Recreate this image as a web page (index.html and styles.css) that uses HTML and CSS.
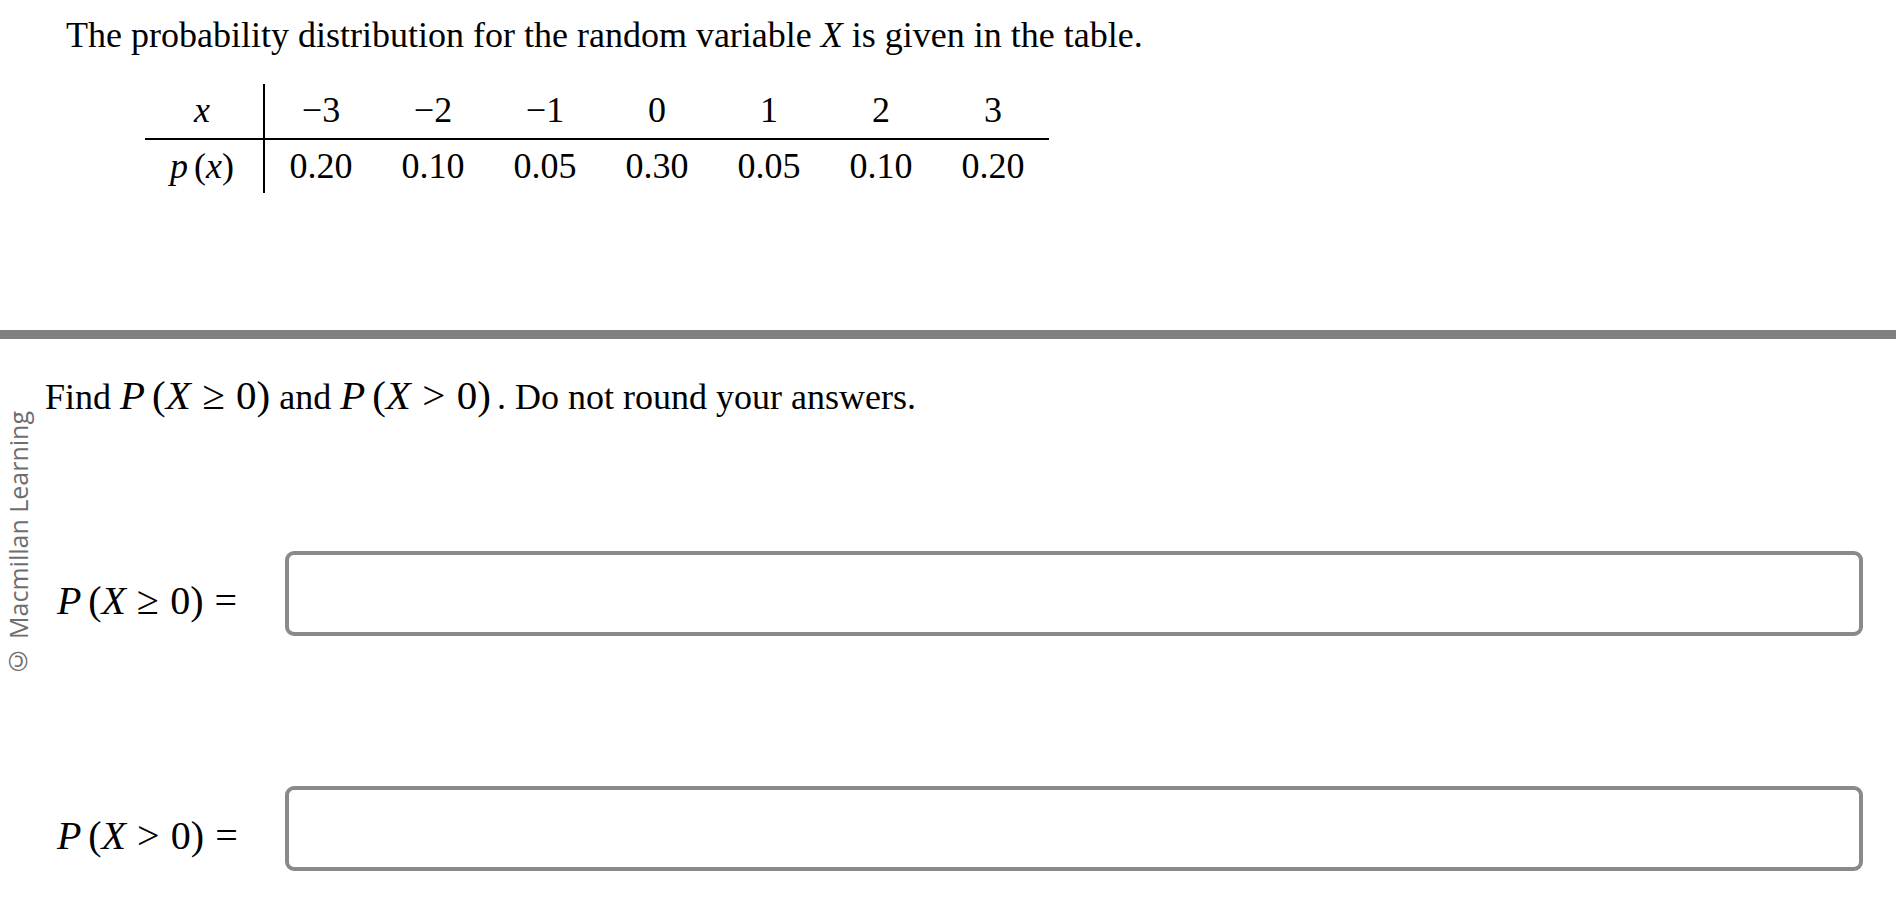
FILE: index.html
```html
<!DOCTYPE html>
<html lang="en">
<head>
<meta charset="utf-8">
<title>Probability distribution</title>
<link rel="stylesheet" href="styles.css">
</head>
<body>
<div class="page">
  <section class="intro">
    <p class="stem">The probability distribution for the random variable <i>X</i> is given in the table.</p>
    <div class="dist">
      <div class="cell head top"><i>x</i></div>
      <div class="cell top">&minus;3</div>
      <div class="cell top">&minus;2</div>
      <div class="cell top">&minus;1</div>
      <div class="cell top">0</div>
      <div class="cell top">1</div>
      <div class="cell top">2</div>
      <div class="cell top">3</div>
      <div class="cell head bottom"><i>p</i><span class="thin"></span>(<i>x</i>)</div>
      <div class="cell bottom">0.20</div>
      <div class="cell bottom">0.10</div>
      <div class="cell bottom">0.05</div>
      <div class="cell bottom">0.30</div>
      <div class="cell bottom">0.05</div>
      <div class="cell bottom">0.10</div>
      <div class="cell bottom">0.20</div>
    </div>
  </section>

  <div class="divider"></div>

  <section class="question">
    <p class="prompt">Find <span class="math"><i>P</i><span class="thin"></span>(<i>X</i><span class="rel">&ge;</span>0)</span> and <span class="math"><i>P</i><span class="thin"></span>(<i>X</i><span class="rel">&gt;</span>0)</span><span class="thin"></span>. Do not round your answers.</p>
    <div class="answers">
      <label class="answer-label" for="a1"><i>P</i><span class="thin"></span>(<i>X</i><span class="rel">&ge;</span>0)<span class="rel">=</span></label>
      <input class="answer-box" id="a1" type="text">
      <label class="answer-label" for="a2"><i>P</i><span class="thin"></span>(<i>X</i><span class="rel">&gt;</span>0)<span class="rel">=</span></label>
      <input class="answer-box" id="a2" type="text">
    </div>
  </section>

  <div class="watermark">&copy; Macmillan Learning</div>
</div>
</body>
</html>
```

FILE: styles.css
```css
html, body {
  margin: 0;
  padding: 0;
  background: #ffffff;
}

.page {
  position: relative;
  width: 1896px;
  min-height: 919px;
  font-family: "Liberation Serif", "Times New Roman", serif;
  color: #000000;
}

i {
  font-style: italic;
}

.thin {
  display: inline-block;
  width: 0.17em;
}

.rel {
  padding: 0 0.278em;
}

.math {
  font-size: 41px;
  line-height: 0;
}

.intro {
  padding: 15px 0 0 66px;
}

.stem {
  margin: 0;
  font-size: 36px;
  line-height: 40px;
}

.dist {
  display: grid;
  grid-template-columns: 120px repeat(7, 112px);
  margin: 29px 0 0 79px;
  font-size: 36px;
  width: max-content;
}

.cell {
  text-align: center;
  line-height: 32px;
}

.cell.top {
  padding: 10px 0 12px;
  border-bottom: 2px solid #000000;
}

.cell.bottom {
  padding: 10px 0 11px;
}

.cell.head {
  border-right: 2px solid #000000;
  padding-right: 4px;
}

.divider {
  margin-top: 137px;
  height: 9px;
  background: #808080;
}

.question {
  padding: 38px 33px 0 45px;
}

.prompt {
  margin: 0;
  font-size: 36px;
  line-height: 40px;
}

.answers {
  display: grid;
  grid-template-columns: 240px 1fr;
  row-gap: 150px;
  margin-top: 134px;
  align-items: start;
}

.answer-label {
  padding: 30px 0 0 12px;
  font-size: 40px;
  line-height: 40px;
  white-space: nowrap;
}

.answer-box {
  box-sizing: border-box;
  height: 85px;
  margin: 0;
  border: 4px solid #8a8a8a;
  border-radius: 9px;
  background: #ffffff;
  font-size: 30px;
  font-family: "Liberation Serif", serif;
  padding: 0 14px;
  outline: none;
}

.watermark {
  position: absolute;
  left: 3px;
  top: 411px;
  writing-mode: vertical-rl;
  transform: rotate(180deg);
  font-family: "Open Sans", "DejaVu Sans", sans-serif;
  font-size: 25px;
  line-height: 30px;
  color: #6e6e6e;
  white-space: nowrap;
}
```
